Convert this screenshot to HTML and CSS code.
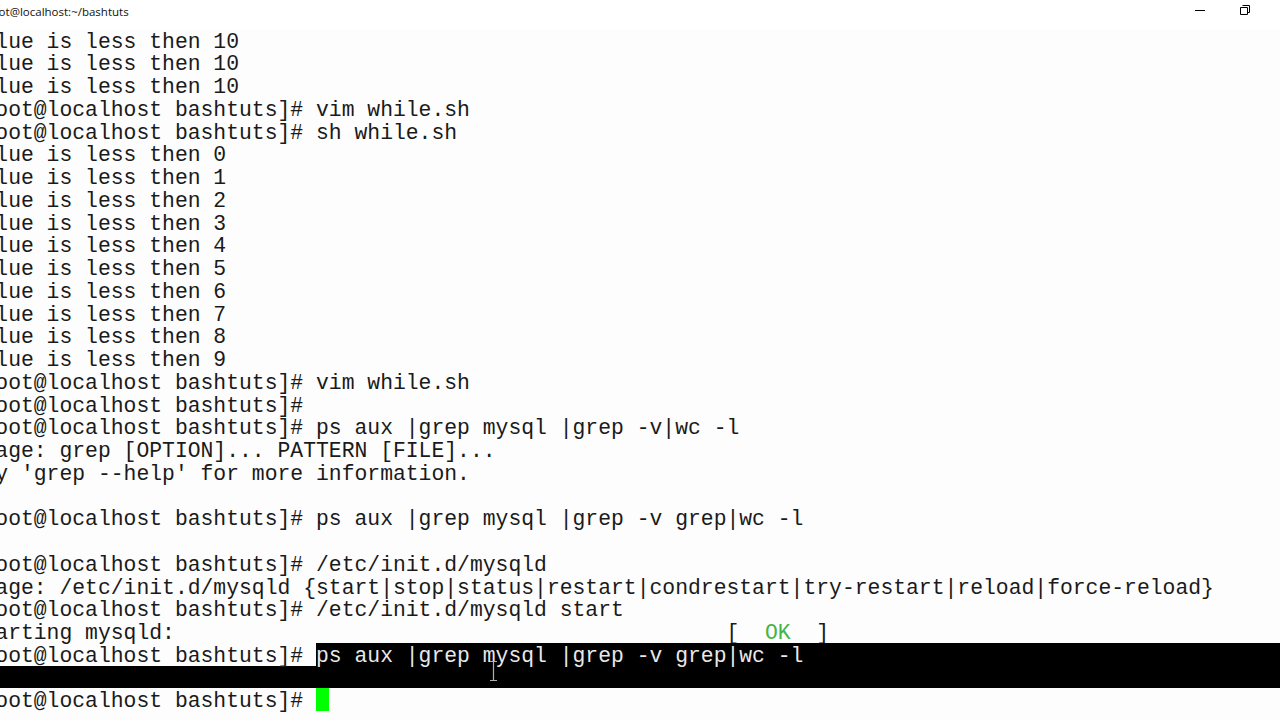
FILE: index.html
```html
<!DOCTYPE html>
<html>
<head>
<meta charset="utf-8">
<link rel="stylesheet" href="styles.css">
</head>
<body>
<div class="window">
  <div class="titlebar">
    <span class="title">root@localhost:~/bashtuts</span>
    <div class="controls">
      <span class="ctl"><svg width="12" height="12" viewBox="0 0 12 12"><path d="M1 6.5h10" stroke="#000" stroke-width="1"/></svg></span>
      <span class="ctl"><svg width="12" height="12" viewBox="0 0 12 12"><path d="M3.5 1.5h7v7h-2M1.5 3.5h7v7h-7z" fill="none" stroke="#000" stroke-width="1"/></svg></span>
    </div>
  </div>
  <div class="term">
<div class="line">lue is less then 10</div>
<div class="line">lue is less then 10</div>
<div class="line">lue is less then 10</div>
<div class="line">oot@localhost bashtuts]# vim while.sh</div>
<div class="line">oot@localhost bashtuts]# sh while.sh</div>
<div class="line">lue is less then 0</div>
<div class="line">lue is less then 1</div>
<div class="line">lue is less then 2</div>
<div class="line">lue is less then 3</div>
<div class="line">lue is less then 4</div>
<div class="line">lue is less then 5</div>
<div class="line">lue is less then 6</div>
<div class="line">lue is less then 7</div>
<div class="line">lue is less then 8</div>
<div class="line">lue is less then 9</div>
<div class="line">oot@localhost bashtuts]# vim while.sh</div>
<div class="line">oot@localhost bashtuts]# </div>
<div class="line">oot@localhost bashtuts]# ps aux |grep mysql |grep -v|wc -l</div>
<div class="line">age: grep [OPTION]... PATTERN [FILE]...</div>
<div class="line">y 'grep --help' for more information.</div>
<div class="line"> </div>
<div class="line">oot@localhost bashtuts]# ps aux |grep mysql |grep -v grep|wc -l</div>
<div class="line"> </div>
<div class="line">oot@localhost bashtuts]# /etc/init.d/mysqld</div>
<div class="line">age: /etc/init.d/mysqld {start|stop|status|restart|condrestart|try-restart|reload|force-reload}</div>
<div class="line">oot@localhost bashtuts]# /etc/init.d/mysqld start</div>
<div class="line">arting mysqld:                                           [  <span class="ok">OK</span>  ]</div>
<div class="line split"><span class="seg">oot@localhost bashtuts]# </span><span class="seg sel">ps aux |grep mysql |grep -v grep|wc -l</span></div>
<div class="line sel-line"> </div>
<div class="line split"><span class="seg">oot@localhost bashtuts]# </span><span class="cursor"></span></div>
  </div>
  <svg class="ibeam" width="9" height="20" viewBox="0 0 9 20"><path d="M1 0.5h7M4.5 0.5v19M1 19.5h7" stroke="#b0b0b0" stroke-width="1.2" fill="none"/></svg>
</div>
</body>
</html>
```

FILE: styles.css
```css
html, body {
  margin: 0;
  padding: 0;
  background: #fdfdfd;
  overflow: hidden;
}
.window {
  position: relative;
  width: 1280px;
  height: 720px;
  background: #fdfdfd;
  overflow: hidden;
}
.titlebar {
  height: 28.6px;
  display: flex;
  align-items: flex-start;
  justify-content: space-between;
  background: #fff;
}
.title {
  font-family: "Open Sans", "Noto Sans", sans-serif;
  font-size: 11.5px;
  color: #111;
  line-height: 24px;
  margin-left: -13px;
}
.controls {
  display: flex;
  gap: 33px;
  margin-right: 29px;
  padding-top: 4px;
}
.ctl {
  display: flex;
  width: 12px;
  height: 12px;
}
.term {
  margin-left: -4.7px;
  font-family: "Liberation Mono", "Courier New", monospace;
  font-size: 21.38px;
  color: #1a1a1a;
}
.line {
  white-space: pre;
  height: 22.76px;
  line-height: 18.76px;
  padding-top: 4px;
  box-sizing: border-box;
}
.line.split {
  display: flex;
  padding-top: 0;
}
.seg {
  white-space: pre;
  padding-top: 4px;
  height: 22.76px;
  box-sizing: border-box;
}
.ok {
  color: #45b545;
}
.sel {
  flex: 1;
  background: #000;
  color: #e8e8e8;
  margin-right: -10px;
}
.sel-line {
  background: #000;
  margin-right: -10px;
}
.cursor {
  background: #00ff00;
  width: 13px;
  height: 22.76px;
}
.ibeam {
  position: absolute;
  left: 489px;
  top: 661px;
}
```
